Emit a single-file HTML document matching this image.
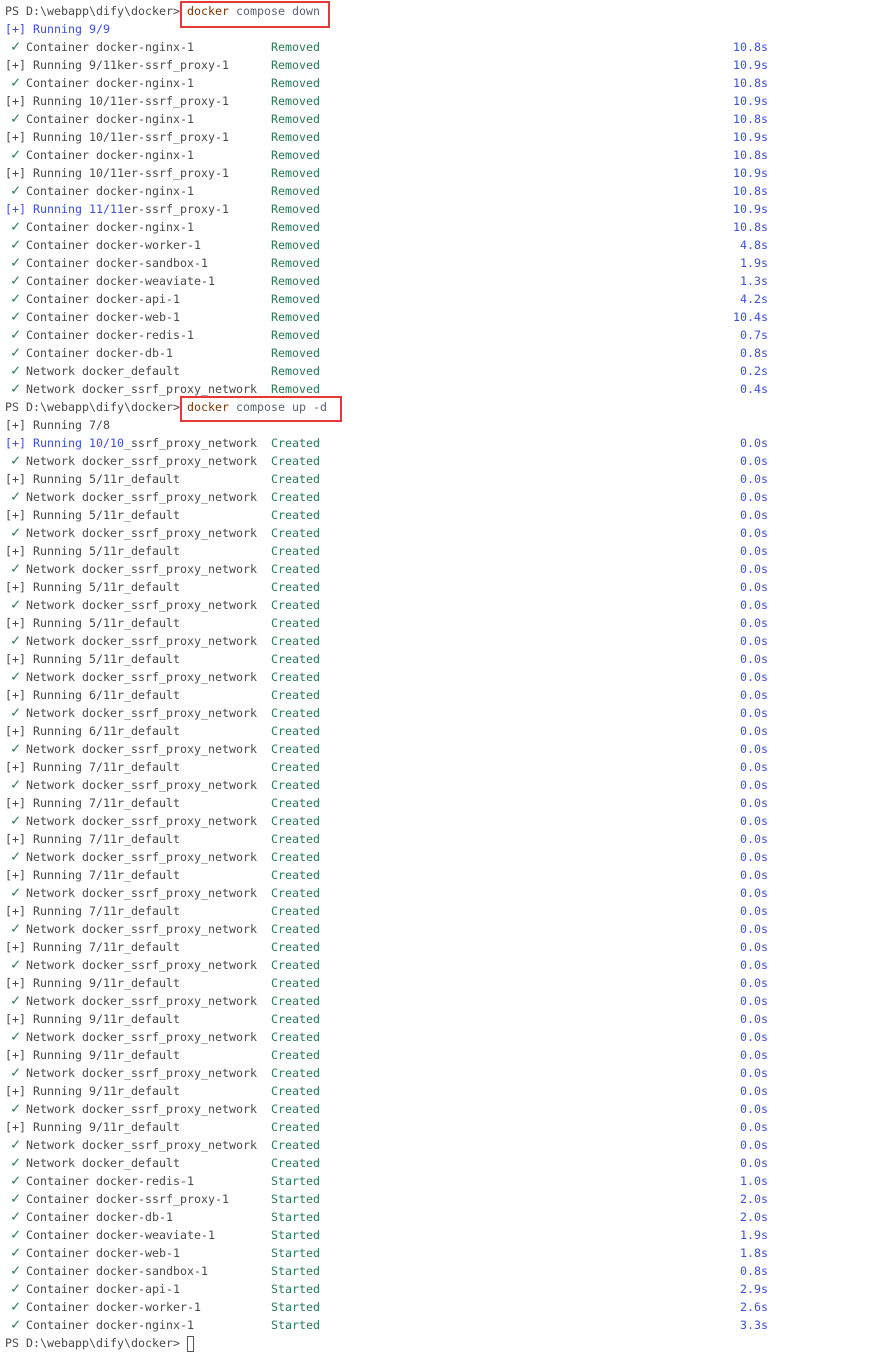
<!DOCTYPE html>
<html><head><meta charset="utf-8"><style>
html,body{margin:0;padding:0;background:#fff;width:895px;height:1368px;overflow:hidden}
#t{position:absolute;top:2px;left:0;width:895px;font-family:"DejaVu Sans Mono","Liberation Mono",monospace;font-size:11.63px;color:#4a4a4a}
.r{position:relative;height:18px;line-height:18px;white-space:pre}
.a{position:absolute;left:5px}
.c{position:absolute;left:11px;top:-1px;color:#2b7a57;font-size:15px;font-weight:bold}
.c + .a{left:12px}
.s{position:absolute;left:271px;color:#2b7a57}
.d{position:absolute;right:127px;color:#3b4fd9}
.b{color:#3b4fd9}
.cm{color:#7a3300}
.cg{color:#5a6478}
.box{position:absolute;border:2px solid #e53935;box-sizing:border-box}
.cur{display:inline-block;width:7px;height:16px;border:1px solid #555;vertical-align:middle;box-sizing:border-box}
</style></head><body>
<div class="box" style="left:180px;top:1px;width:150px;height:27px"></div>
<div class="box" style="left:180px;top:396px;width:162px;height:26px"></div>
<div id="t">
<div class="r"><span class="a">PS D:\webapp\dify\docker&gt; <span class="cm">docker</span><span class="cg"> compose down</span></span></div>
<div class="r"><span class="a b">[+] Running 9/9</span></div>
<div class="r"><span class="c">✓</span><span class="a">  Container docker-nginx-1</span><span class="s">Removed</span><span class="d">10.8s</span></div>
<div class="r"><span class="a">[+] Running 9/11ker-ssrf_proxy-1</span><span class="s">Removed</span><span class="d">10.9s</span></div>
<div class="r"><span class="c">✓</span><span class="a">  Container docker-nginx-1</span><span class="s">Removed</span><span class="d">10.8s</span></div>
<div class="r"><span class="a">[+] Running 10/11er-ssrf_proxy-1</span><span class="s">Removed</span><span class="d">10.9s</span></div>
<div class="r"><span class="c">✓</span><span class="a">  Container docker-nginx-1</span><span class="s">Removed</span><span class="d">10.8s</span></div>
<div class="r"><span class="a">[+] Running 10/11er-ssrf_proxy-1</span><span class="s">Removed</span><span class="d">10.9s</span></div>
<div class="r"><span class="c">✓</span><span class="a">  Container docker-nginx-1</span><span class="s">Removed</span><span class="d">10.8s</span></div>
<div class="r"><span class="a">[+] Running 10/11er-ssrf_proxy-1</span><span class="s">Removed</span><span class="d">10.9s</span></div>
<div class="r"><span class="c">✓</span><span class="a">  Container docker-nginx-1</span><span class="s">Removed</span><span class="d">10.8s</span></div>
<div class="r"><span class="a"><span class="b">[+] Running 11/11</span>er-ssrf_proxy-1</span><span class="s">Removed</span><span class="d">10.9s</span></div>
<div class="r"><span class="c">✓</span><span class="a">  Container docker-nginx-1</span><span class="s">Removed</span><span class="d">10.8s</span></div>
<div class="r"><span class="c">✓</span><span class="a">  Container docker-worker-1</span><span class="s">Removed</span><span class="d">4.8s</span></div>
<div class="r"><span class="c">✓</span><span class="a">  Container docker-sandbox-1</span><span class="s">Removed</span><span class="d">1.9s</span></div>
<div class="r"><span class="c">✓</span><span class="a">  Container docker-weaviate-1</span><span class="s">Removed</span><span class="d">1.3s</span></div>
<div class="r"><span class="c">✓</span><span class="a">  Container docker-api-1</span><span class="s">Removed</span><span class="d">4.2s</span></div>
<div class="r"><span class="c">✓</span><span class="a">  Container docker-web-1</span><span class="s">Removed</span><span class="d">10.4s</span></div>
<div class="r"><span class="c">✓</span><span class="a">  Container docker-redis-1</span><span class="s">Removed</span><span class="d">0.7s</span></div>
<div class="r"><span class="c">✓</span><span class="a">  Container docker-db-1</span><span class="s">Removed</span><span class="d">0.8s</span></div>
<div class="r"><span class="c">✓</span><span class="a">  Network docker_default</span><span class="s">Removed</span><span class="d">0.2s</span></div>
<div class="r"><span class="c">✓</span><span class="a">  Network docker_ssrf_proxy_network</span><span class="s">Removed</span><span class="d">0.4s</span></div>
<div class="r"><span class="a">PS D:\webapp\dify\docker&gt; <span class="cm">docker</span><span class="cg"> compose up -d</span></span></div>
<div class="r"><span class="a">[+] Running 7/8</span></div>
<div class="r"><span class="a"><span class="b">[+] Running 10/10</span>_ssrf_proxy_network</span><span class="s">Created</span><span class="d">0.0s</span></div>
<div class="r"><span class="c">✓</span><span class="a">  Network docker_ssrf_proxy_network</span><span class="s">Created</span><span class="d">0.0s</span></div>
<div class="r"><span class="a">[+] Running 5/11r_default</span><span class="s">Created</span><span class="d">0.0s</span></div>
<div class="r"><span class="c">✓</span><span class="a">  Network docker_ssrf_proxy_network</span><span class="s">Created</span><span class="d">0.0s</span></div>
<div class="r"><span class="a">[+] Running 5/11r_default</span><span class="s">Created</span><span class="d">0.0s</span></div>
<div class="r"><span class="c">✓</span><span class="a">  Network docker_ssrf_proxy_network</span><span class="s">Created</span><span class="d">0.0s</span></div>
<div class="r"><span class="a">[+] Running 5/11r_default</span><span class="s">Created</span><span class="d">0.0s</span></div>
<div class="r"><span class="c">✓</span><span class="a">  Network docker_ssrf_proxy_network</span><span class="s">Created</span><span class="d">0.0s</span></div>
<div class="r"><span class="a">[+] Running 5/11r_default</span><span class="s">Created</span><span class="d">0.0s</span></div>
<div class="r"><span class="c">✓</span><span class="a">  Network docker_ssrf_proxy_network</span><span class="s">Created</span><span class="d">0.0s</span></div>
<div class="r"><span class="a">[+] Running 5/11r_default</span><span class="s">Created</span><span class="d">0.0s</span></div>
<div class="r"><span class="c">✓</span><span class="a">  Network docker_ssrf_proxy_network</span><span class="s">Created</span><span class="d">0.0s</span></div>
<div class="r"><span class="a">[+] Running 5/11r_default</span><span class="s">Created</span><span class="d">0.0s</span></div>
<div class="r"><span class="c">✓</span><span class="a">  Network docker_ssrf_proxy_network</span><span class="s">Created</span><span class="d">0.0s</span></div>
<div class="r"><span class="a">[+] Running 6/11r_default</span><span class="s">Created</span><span class="d">0.0s</span></div>
<div class="r"><span class="c">✓</span><span class="a">  Network docker_ssrf_proxy_network</span><span class="s">Created</span><span class="d">0.0s</span></div>
<div class="r"><span class="a">[+] Running 6/11r_default</span><span class="s">Created</span><span class="d">0.0s</span></div>
<div class="r"><span class="c">✓</span><span class="a">  Network docker_ssrf_proxy_network</span><span class="s">Created</span><span class="d">0.0s</span></div>
<div class="r"><span class="a">[+] Running 7/11r_default</span><span class="s">Created</span><span class="d">0.0s</span></div>
<div class="r"><span class="c">✓</span><span class="a">  Network docker_ssrf_proxy_network</span><span class="s">Created</span><span class="d">0.0s</span></div>
<div class="r"><span class="a">[+] Running 7/11r_default</span><span class="s">Created</span><span class="d">0.0s</span></div>
<div class="r"><span class="c">✓</span><span class="a">  Network docker_ssrf_proxy_network</span><span class="s">Created</span><span class="d">0.0s</span></div>
<div class="r"><span class="a">[+] Running 7/11r_default</span><span class="s">Created</span><span class="d">0.0s</span></div>
<div class="r"><span class="c">✓</span><span class="a">  Network docker_ssrf_proxy_network</span><span class="s">Created</span><span class="d">0.0s</span></div>
<div class="r"><span class="a">[+] Running 7/11r_default</span><span class="s">Created</span><span class="d">0.0s</span></div>
<div class="r"><span class="c">✓</span><span class="a">  Network docker_ssrf_proxy_network</span><span class="s">Created</span><span class="d">0.0s</span></div>
<div class="r"><span class="a">[+] Running 7/11r_default</span><span class="s">Created</span><span class="d">0.0s</span></div>
<div class="r"><span class="c">✓</span><span class="a">  Network docker_ssrf_proxy_network</span><span class="s">Created</span><span class="d">0.0s</span></div>
<div class="r"><span class="a">[+] Running 7/11r_default</span><span class="s">Created</span><span class="d">0.0s</span></div>
<div class="r"><span class="c">✓</span><span class="a">  Network docker_ssrf_proxy_network</span><span class="s">Created</span><span class="d">0.0s</span></div>
<div class="r"><span class="a">[+] Running 9/11r_default</span><span class="s">Created</span><span class="d">0.0s</span></div>
<div class="r"><span class="c">✓</span><span class="a">  Network docker_ssrf_proxy_network</span><span class="s">Created</span><span class="d">0.0s</span></div>
<div class="r"><span class="a">[+] Running 9/11r_default</span><span class="s">Created</span><span class="d">0.0s</span></div>
<div class="r"><span class="c">✓</span><span class="a">  Network docker_ssrf_proxy_network</span><span class="s">Created</span><span class="d">0.0s</span></div>
<div class="r"><span class="a">[+] Running 9/11r_default</span><span class="s">Created</span><span class="d">0.0s</span></div>
<div class="r"><span class="c">✓</span><span class="a">  Network docker_ssrf_proxy_network</span><span class="s">Created</span><span class="d">0.0s</span></div>
<div class="r"><span class="a">[+] Running 9/11r_default</span><span class="s">Created</span><span class="d">0.0s</span></div>
<div class="r"><span class="c">✓</span><span class="a">  Network docker_ssrf_proxy_network</span><span class="s">Created</span><span class="d">0.0s</span></div>
<div class="r"><span class="a">[+] Running 9/11r_default</span><span class="s">Created</span><span class="d">0.0s</span></div>
<div class="r"><span class="c">✓</span><span class="a">  Network docker_ssrf_proxy_network</span><span class="s">Created</span><span class="d">0.0s</span></div>
<div class="r"><span class="c">✓</span><span class="a">  Network docker_default</span><span class="s">Created</span><span class="d">0.0s</span></div>
<div class="r"><span class="c">✓</span><span class="a">  Container docker-redis-1</span><span class="s">Started</span><span class="d">1.0s</span></div>
<div class="r"><span class="c">✓</span><span class="a">  Container docker-ssrf_proxy-1</span><span class="s">Started</span><span class="d">2.0s</span></div>
<div class="r"><span class="c">✓</span><span class="a">  Container docker-db-1</span><span class="s">Started</span><span class="d">2.0s</span></div>
<div class="r"><span class="c">✓</span><span class="a">  Container docker-weaviate-1</span><span class="s">Started</span><span class="d">1.9s</span></div>
<div class="r"><span class="c">✓</span><span class="a">  Container docker-web-1</span><span class="s">Started</span><span class="d">1.8s</span></div>
<div class="r"><span class="c">✓</span><span class="a">  Container docker-sandbox-1</span><span class="s">Started</span><span class="d">0.8s</span></div>
<div class="r"><span class="c">✓</span><span class="a">  Container docker-api-1</span><span class="s">Started</span><span class="d">2.9s</span></div>
<div class="r"><span class="c">✓</span><span class="a">  Container docker-worker-1</span><span class="s">Started</span><span class="d">2.6s</span></div>
<div class="r"><span class="c">✓</span><span class="a">  Container docker-nginx-1</span><span class="s">Started</span><span class="d">3.3s</span></div>
<div class="r"><span class="a">PS D:\webapp\dify\docker&gt; <span class="cur"></span></span></div>
</div>
</body></html>
